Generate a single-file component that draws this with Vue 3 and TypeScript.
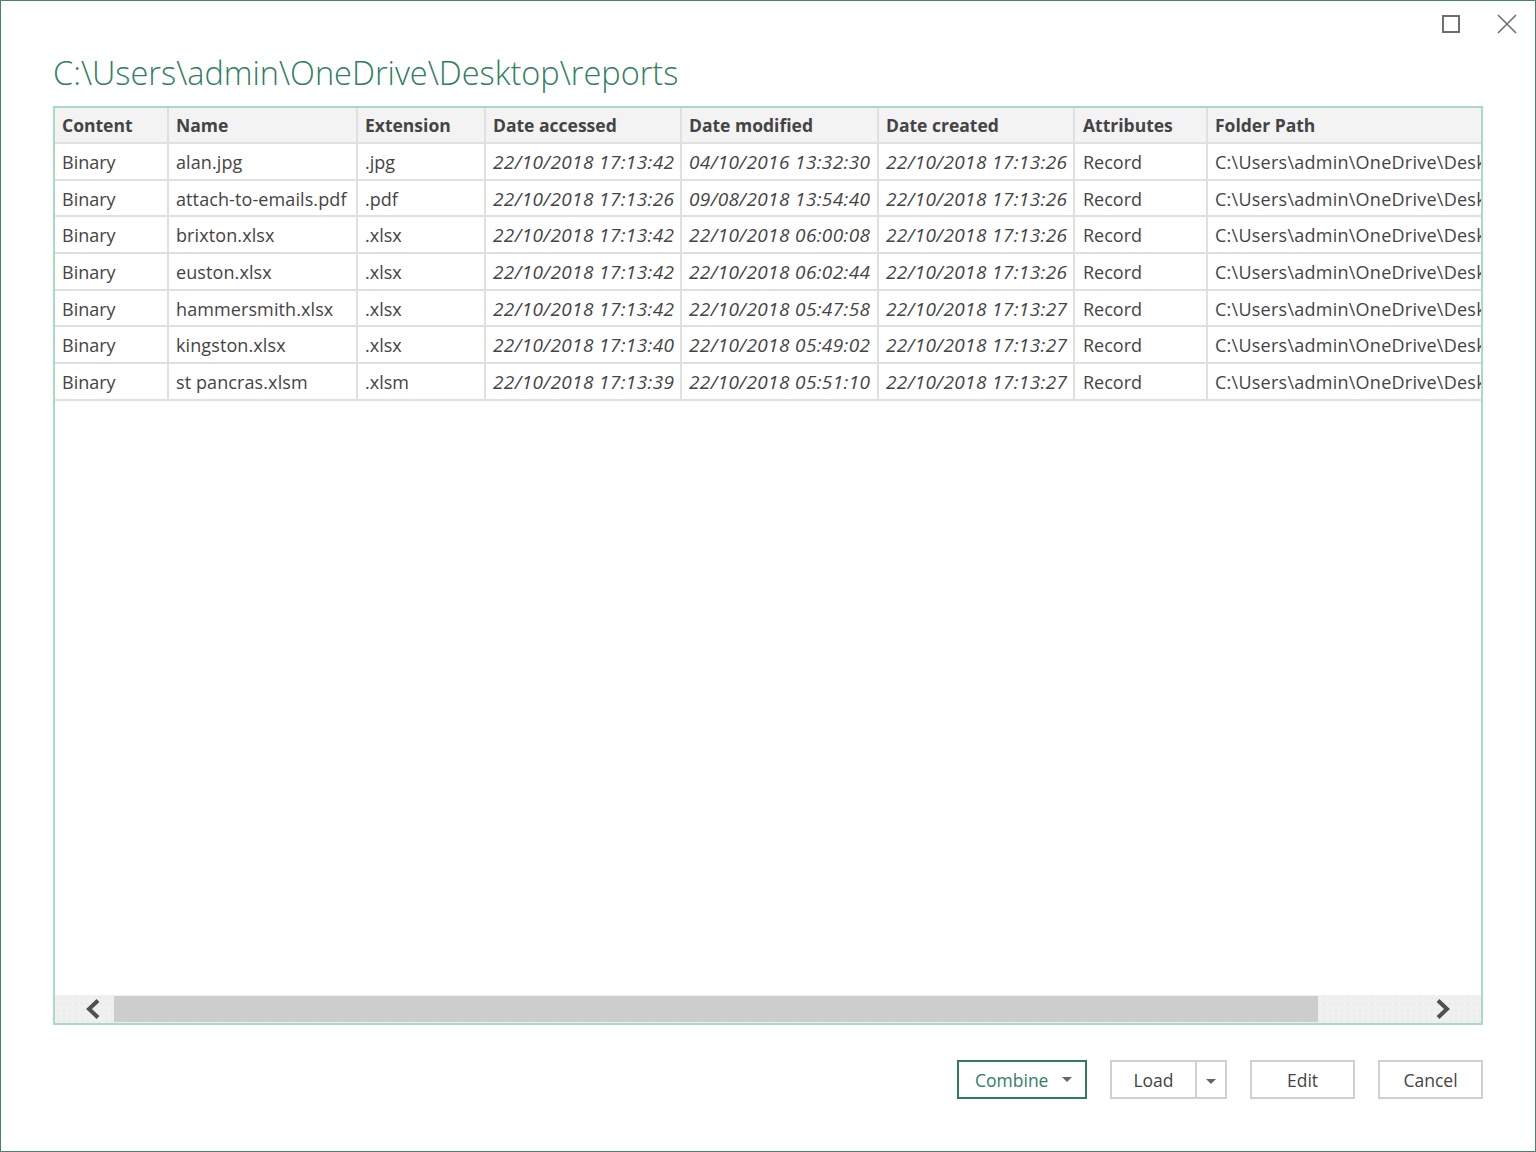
<template>
  <div class="dialog">
    <div class="window-controls">
      <button class="win-btn" type="button" aria-label="Maximize">
        <svg width="18" height="18" viewBox="0 0 18 18"><rect x="1" y="1" width="16" height="16" fill="none" stroke="#6e6e6e" stroke-width="2" /></svg>
      </button>
      <button class="win-btn" type="button" aria-label="Close">
        <svg width="20" height="20" viewBox="0 0 20 20"><path d="M1 1 L19 19 M19 1 L1 19" fill="none" stroke="#6e6e6e" stroke-width="1.6" /></svg>
      </button>
    </div>
    <h1 class="title">C:\Users\admin\OneDrive\Desktop\reports</h1>
    <div class="preview">
      <div class="table-area">
        <table class="grid">
          <colgroup>
            <col v-for="(w, i) in colWidths" :key="i" :style="{ width: w + 'px' }" />
          </colgroup>
          <thead>
            <tr>
              <th v-for="c in columns" :key="c">{{ c }}</th>
            </tr>
          </thead>
          <tbody>
            <tr v-for="r in rows" :key="r.name">
              <td>Binary</td>
              <td class="name">{{ r.name }}</td>
              <td>{{ r.ext }}</td>
              <td class="date">{{ r.accessed }}</td>
              <td class="date">{{ r.modified }}</td>
              <td class="date">{{ r.created }}</td>
              <td>Record</td>
              <td class="path">{{ folderPath }}</td>
            </tr>
          </tbody>
        </table>
      </div>
      <div class="scrollbar">
        <div class="scroll-end left">
          <svg width="16" height="20" viewBox="0 0 16 20"><path d="M13 1.5 L4 10 L13 18.5" fill="none" stroke="#505050" stroke-width="4" /></svg>
        </div>
        <div class="thumb"></div>
        <div class="scroll-end right">
          <svg width="16" height="20" viewBox="0 0 16 20"><path d="M3 1.5 L12 10 L3 18.5" fill="none" stroke="#505050" stroke-width="4" /></svg>
        </div>
      </div>
    </div>
    <div class="actions">
      <button class="btn combine" type="button">Combine<span class="caret"></span></button>
      <div class="split">
        <button class="split-main" type="button">Load</button>
        <button class="split-arrow" type="button" aria-label="Load options"><span class="caret grey"></span></button>
      </div>
      <button class="btn plain" type="button">Edit</button>
      <button class="btn plain" type="button">Cancel</button>
    </div>
  </div>
</template>

<script setup lang="ts">
const columns = ['Content', 'Name', 'Extension', 'Date accessed', 'Date modified', 'Date created', 'Attributes', 'Folder Path']
const colWidths = [114, 189, 128, 196, 197, 196, 133, 275]
const folderPath = 'C:\\Users\\admin\\OneDrive\\Desktop\\reports\\'

const rows = [
  { name: 'alan.jpg', ext: '.jpg', accessed: '22/10/2018 17:13:42', modified: '04/10/2016 13:32:30', created: '22/10/2018 17:13:26' },
  { name: 'attach-to-emails.pdf', ext: '.pdf', accessed: '22/10/2018 17:13:26', modified: '09/08/2018 13:54:40', created: '22/10/2018 17:13:26' },
  { name: 'brixton.xlsx', ext: '.xlsx', accessed: '22/10/2018 17:13:42', modified: '22/10/2018 06:00:08', created: '22/10/2018 17:13:26' },
  { name: 'euston.xlsx', ext: '.xlsx', accessed: '22/10/2018 17:13:42', modified: '22/10/2018 06:02:44', created: '22/10/2018 17:13:26' },
  { name: 'hammersmith.xlsx', ext: '.xlsx', accessed: '22/10/2018 17:13:42', modified: '22/10/2018 05:47:58', created: '22/10/2018 17:13:27' },
  { name: 'kingston.xlsx', ext: '.xlsx', accessed: '22/10/2018 17:13:40', modified: '22/10/2018 05:49:02', created: '22/10/2018 17:13:27' },
  { name: 'st pancras.xlsm', ext: '.xlsm', accessed: '22/10/2018 17:13:39', modified: '22/10/2018 05:51:10', created: '22/10/2018 17:13:27' }
]
</script>

<style>
html, body {
  margin: 0;
  background: #fff;
}
</style>

<style scoped>
.dialog {
  box-sizing: border-box;
  width: 1536px;
  height: 1152px;
  border: 1px solid #3f8a66;
  background: #fff;
  padding: 0 52px 0 52px;
  display: flex;
  flex-direction: column;
  font-family: "Open Sans", "Noto Sans", sans-serif;
  color: #444;
}
.window-controls {
  height: 46px;
  margin-right: -52px;
  padding: 13px 18px 0 0;
  box-sizing: border-box;
  display: flex;
  justify-content: flex-end;
  gap: 37px;
}
.win-btn {
  padding: 0;
  border: none;
  background: none;
  height: 20px;
  display: flex;
  align-items: center;
}
.title {
  margin: 0 0 12px 0;
  height: 47px;
  line-height: 52px;
  font-size: 32.5px;
  font-weight: 300;
  color: #30805f;
  white-space: nowrap;
}
.preview {
  box-sizing: border-box;
  height: 919px;
  border: 2px solid #a8dcc0;
  display: flex;
  flex-direction: column;
}
.table-area {
  flex: 1;
  overflow: hidden;
}
.grid {
  table-layout: fixed;
  border-collapse: separate;
  border-spacing: 0;
  width: 1428px;
  font-size: 18px;
}
.grid th, .grid td {
  box-sizing: border-box;
  height: 36.7px;
  padding: 0 0 0 7px;
  text-align: left;
  white-space: nowrap;
  overflow: hidden;
  border-right: 2px solid #e0e0e0;
  border-bottom: 2px solid #e0e0e0;
}
.grid td {
  padding-top: 1px;
}
.grid th:nth-child(7), .grid td:nth-child(7) {
  padding-left: 8px;
}
.grid th:last-child, .grid td:last-child {
  border-right: none;
}
.grid th {
  background: #f3f3f3;
  font-size: 17.5px;
  font-weight: 700;
  height: 36px;
}
.grid td.date {
  font-size: 19px;
  font-style: italic;
  letter-spacing: 0.37px;
}
.grid td.name {
  letter-spacing: 0.1px;
}
.grid td.path {
  letter-spacing: 0.25px;
}
.scrollbar {
  height: 28px;
  flex: none;
  display: flex;
  background-color: #f0f0f0;
  background-image: radial-gradient(#e2e2e2 0.6px, transparent 0.8px);
  background-size: 6px 6px;
}
.scroll-end {
  display: flex;
  align-items: center;
  justify-content: center;
}
.scroll-end.left {
  width: 59px;
  padding-left: 16px;
  box-sizing: border-box;
}
.scroll-end.right {
  flex: 1;
  padding-left: 86px;
  box-sizing: border-box;
}
.thumb {
  width: 1204px;
  margin: 1px 0;
  background: #cdcdcd;
}
.actions {
  margin-top: 35px;
  display: flex;
  justify-content: flex-end;
  gap: 23px;
}
.btn, .split {
  box-sizing: border-box;
  height: 39px;
  background: #fff;
  font-family: inherit;
  font-size: 17.5px;
  color: #444;
}
.btn {
  border: 2px solid #d0d0d0;
  padding: 0;
}
.plain {
  width: 105px;
}
.combine {
  width: 130px;
  border-color: #2f7d5b;
  color: #30805f;
  display: flex;
  align-items: center;
  padding-left: 16px;
}
.caret {
  display: inline-block;
  margin-left: 14px;
  border-left: 5px solid transparent;
  border-right: 5px solid transparent;
  border-top: 5px solid #666;
}
.caret.grey {
  margin-left: 0;
}
.split {
  width: 117px;
  border: 2px solid #d0d0d0;
  display: flex;
}
.split-main {
  width: 85px;
  border: none;
  border-right: 2px solid #d0d0d0;
  background: none;
  font: inherit;
  color: inherit;
  padding: 0;
}
.split-arrow {
  flex: 1;
  border: none;
  background: none;
  padding: 0;
}
</style>
